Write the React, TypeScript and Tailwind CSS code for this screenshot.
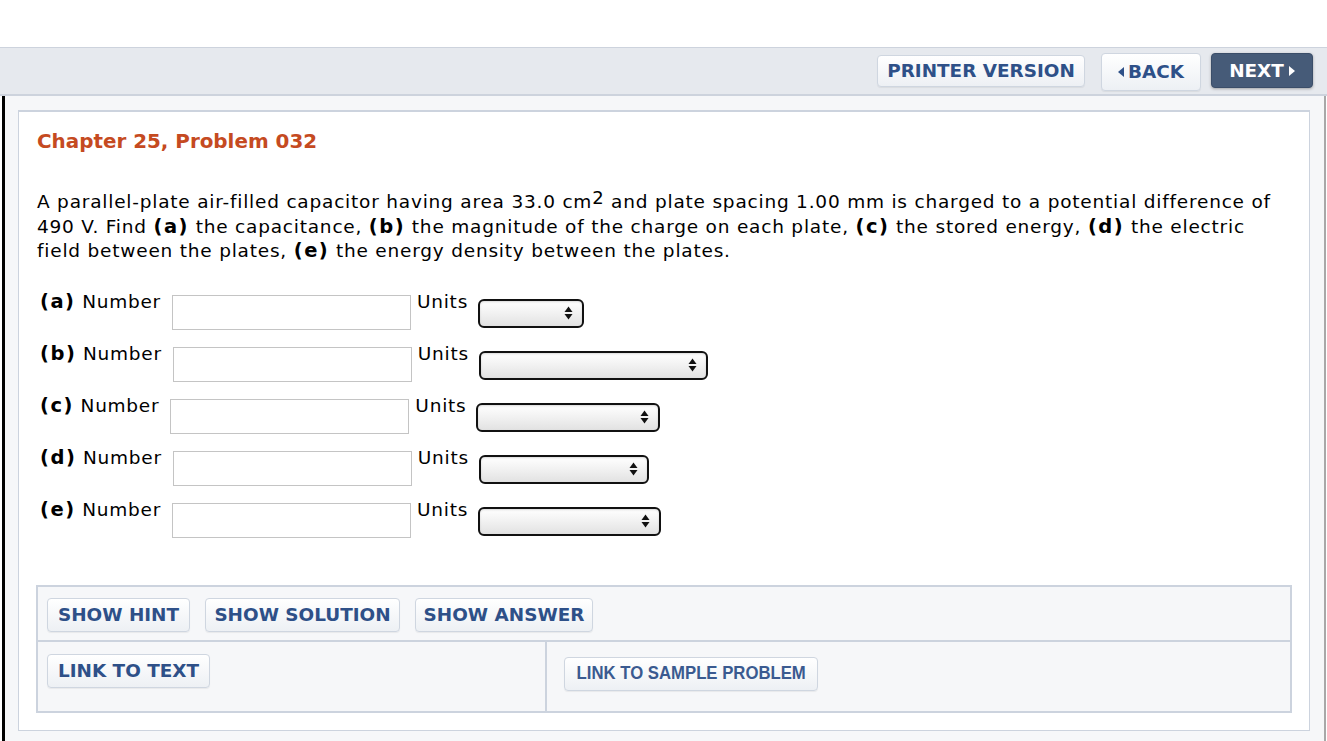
import React from 'react'

const ROWS = [
  { key: 'a', selectW: 'w-[106px]' },
  { key: 'b', selectW: 'w-[229px]' },
  { key: 'c', selectW: 'w-[184px]' },
  { key: 'd', selectW: 'w-[170px]' },
  { key: 'e', selectW: 'w-[183px]' },
]

function LightButton({ children, className = '' }: { children: React.ReactNode; className?: string }) {
  return (
    <button
      type="button"
      className={`flex items-center justify-center rounded-[4px] border border-[#cfd6e0] bg-gradient-to-b from-white to-[#edf0f4] text-[18.4px] font-bold text-[#2e5088] shadow-[0_1px_1px_rgba(0,0,0,0.06)] ${className}`}
    >
      {children}
    </button>
  )
}

function FakeSelect({ width }: { width: string }) {
  return (
    <div
      className={`${width} mt-[9px] flex h-[29px] items-center justify-end rounded-[6px] border-2 border-[#111] bg-gradient-to-b from-white via-[#f1f1f1] to-[#e2e2e2] pr-[9px] shadow-[inset_0_1px_2px_rgba(0,0,0,0.15)]`}
    >
      <svg width="9" height="14" viewBox="0 0 9 14">
        <path d="M4.5 0.5 L8.5 6 L0.5 6 Z" fill="#111" />
        <path d="M0.5 8 L8.5 8 L4.5 13.5 Z" fill="#111" />
      </svg>
    </div>
  )
}

function B({ children }: { children: React.ReactNode }) {
  return <b className="text-[19.5px] tracking-[1.5px]">{children}</b>
}

export default function App() {
  return (
    <div className="h-[741px] w-[1327px] overflow-hidden bg-white font-['DejaVu_Sans','Verdana',sans-serif] text-black">
      <div className="h-[47px]" />

      <div className="flex h-[49px] items-start justify-end border-t border-b-2 border-[#cdd3dd] bg-[#e6e9ee] pr-[14px]">
        <LightButton className="mt-[7px] h-[32px] w-[208px]">PRINTER VERSION</LightButton>
        <LightButton className="ml-[16px] mt-[5px] h-[38px] w-[100px] gap-[4px]">
          <svg width="6" height="10" viewBox="0 0 6 10">
            <path d="M6 0 L0 5 L6 10 Z" fill="#2e5088" />
          </svg>
          BACK
        </LightButton>
        <button
          type="button"
          className="ml-[10px] mt-[5px] flex h-[35px] w-[102px] items-center justify-center gap-[5px] rounded-[4px] border border-[#3b4e69] bg-[#465b78] text-[18.4px] font-bold text-white shadow-[0_1px_3px_rgba(0,0,0,0.3)]"
        >
          NEXT
          <svg width="6" height="10" viewBox="0 0 6 10">
            <path d="M0 0 L6 5 L0 10 Z" fill="#fff" />
          </svg>
        </button>
      </div>

      <div className="ml-[2px] h-[645px] w-[1324px] border-l-[3px] border-r-2 border-l-black border-r-[#a8a8a8] bg-[#f6f7f9] pl-[13px] pr-[14px] pt-[14px]">
        <div className="border border-t-2 border-[#ccd3de] bg-white px-[17px] pb-[17px] pt-[18px]">
          <h1 className="pl-px text-[19.9px] font-bold leading-[24px] text-[#c54a21]">Chapter 25, Problem 032</h1>

          <p className="mt-[36px] whitespace-nowrap pl-px text-[18.5px] leading-[24.5px] tracking-[0.79px]">
            A parallel-plate air-filled capacitor having area 33.0 cm
            <sup className="relative top-[-1px] align-top text-[18px] leading-none">2</sup> and plate spacing 1.00 mm is
            charged to a potential difference of
            <br />
            490 V. Find <B>(a)</B> the capacitance, <B>(b)</B> the magnitude of the charge on each plate, <B>(c)</B> the
            stored energy, <B>(d)</B> the electric
            <br />
            field between the plates, <B>(e)</B> the energy density between the plates.
          </p>

          <div className="mt-[26px] flex flex-col gap-[12px] pl-[4px]">
            {ROWS.map((r) => (
              <div key={r.key} className="flex h-[40px] items-start text-[18.5px] leading-[24px] tracking-[0.75px]">
                <span className="whitespace-nowrap">
                  <B>({r.key})</B> Number
                </span>
                <input
                  type="text"
                  className="ml-[11px] mt-[5px] h-[35px] w-[239px] border border-[#c4c4c4] bg-white px-2 outline-none"
                />
                <span className="ml-[6px]">Units</span>
                <div className="ml-[10px]">
                  <FakeSelect width={r.selectW} />
                </div>
              </div>
            ))}
          </div>

          <div className="mt-[47px] border-2 border-[#ccd3de] bg-[#f6f7f9]">
            <div className="flex h-[55px] gap-[15px] border-b-2 border-[#ccd3de] pl-[9px] pt-[11px]">
              <LightButton className="h-[34px] w-[143px]">SHOW HINT</LightButton>
              <LightButton className="h-[34px] w-[195px]">SHOW SOLUTION</LightButton>
              <LightButton className="h-[34px] w-[178px]">SHOW ANSWER</LightButton>
            </div>
            <div className="flex h-[69px]">
              <div className="w-[509px] border-r-2 border-[#ccd3de] pl-[9px] pt-[12px]">
                <LightButton className="h-[34px] w-[163px]">LINK TO TEXT</LightButton>
              </div>
              <div className="pl-[17px] pt-[15px]">
                <button
                  type="button"
                  className="flex h-[34px] w-[254px] items-center justify-center rounded-[4px] border border-[#cfd6e0] bg-gradient-to-b from-white to-[#edf0f4] font-['Liberation_Sans',sans-serif] text-[19px] font-bold text-[#3a5a90] shadow-[0_1px_1px_rgba(0,0,0,0.06)]"
                >
                  <span className="inline-block scale-x-[0.88] whitespace-nowrap">LINK TO SAMPLE PROBLEM</span>
                </button>
              </div>
            </div>
          </div>
        </div>
      </div>
    </div>
  )
}
